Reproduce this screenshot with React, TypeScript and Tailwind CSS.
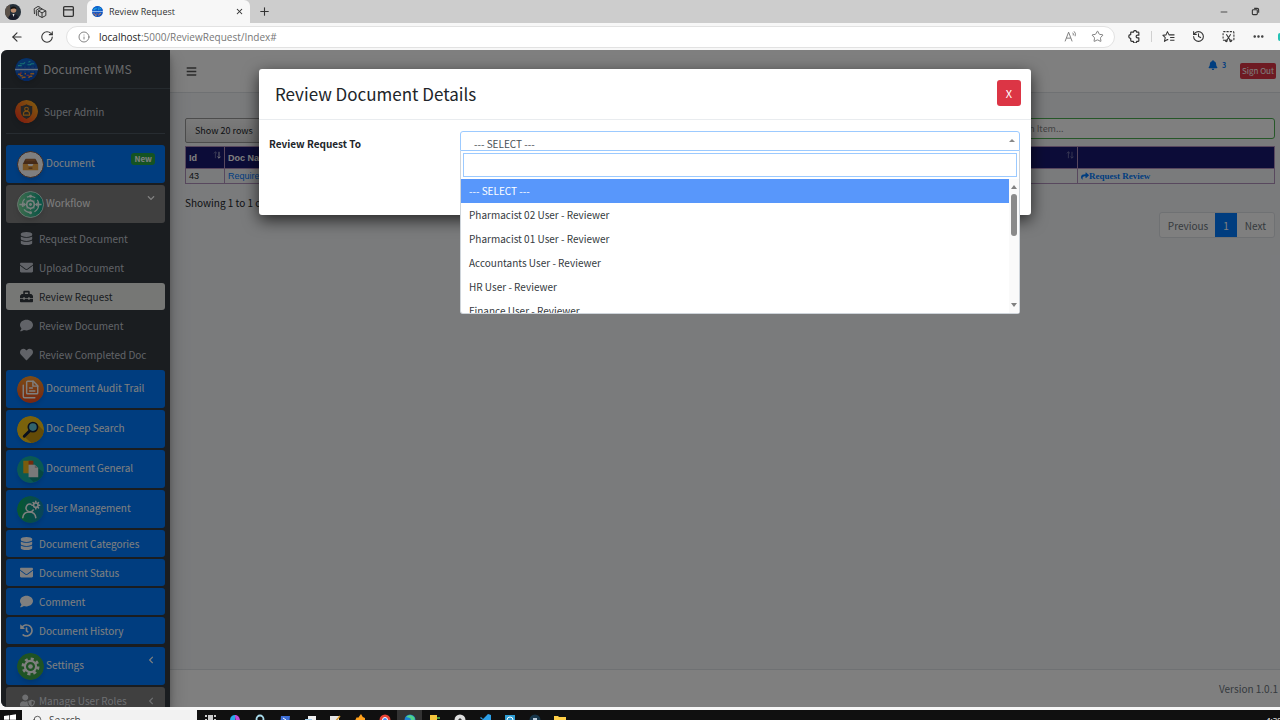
import React, { useState } from 'react';
import {
  FaBars,
  FaBell,
  FaChevronDown,
  FaChevronLeft,
  FaComment,
  FaDatabase,
  FaEnvelope,
  FaHeart,
  FaHistory,
  FaShare,
  FaToolbox,
  FaUserShield,
} from 'react-icons/fa';
import {
  ArrowLeft,
  Ellipsis,
  History,
  Info,
  Minus,
  PanelTop,
  Plus,
  RotateCw,
  Search,
  Star,
  X,
} from 'lucide-react';

const reviewers = [
  '--- SELECT ---',
  'Pharmacist 02 User - Reviewer',
  'Pharmacist 01 User - Reviewer',
  'Accountants User - Reviewer',
  'HR User - Reviewer',
  'Finance User - Reviewer',
];

/* ---------- round icons ---------- */

function GlobeLogo({ className }: { className?: string }) {
  return (
    <svg viewBox="0 0 24 24" className={className} aria-hidden="true">
      <circle cx="12" cy="12" r="12" fill="#0a4fc0" />
      <path d="M1.500 8a11 11 0 0 1 21 0z" fill="#0d66d0" />
      <path d="M0 11.300h24v1.400H0z" fill="#cfe8ff" />
      <path d="M1 9.500h22M1 14.500h22" stroke="#3f8fe8" strokeWidth=".7" strokeDasharray="3 1" />
      <path d="M5 6h4l1.500-1.500M14 4.500l2-1M13 7h3l1-1h3M3 8h4" stroke="#2fe0e6" strokeWidth="1.200" fill="none" />
      <path d="M3 17h2l1 1.500h2M10 16.500h1.500M16 16.500h4M7 21l2-1h2M14 20.500l2-1.500h2" stroke="#ff9c3a" strokeWidth="1.500" fill="none" />
      <path d="M12 18h3M5 15.800h2" stroke="#ff4d5e" strokeWidth="1.300" />
    </svg>
  );
}

function ShieldUser() {
  return (
    <svg viewBox="0 0 24 24" className="size-[23px] rounded-full shadow-md" aria-hidden="true">
      <defs>
        <linearGradient id="shieldBg" x1="0" y1="1" x2="1" y2="0">
          <stop offset="0" stopColor="#ff2a1c" />
          <stop offset="1" stopColor="#ffc01e" />
        </linearGradient>
      </defs>
      <circle cx="12" cy="12" r="12" fill="url(#shieldBg)" />
      <path d="M12 4.500c2 1.400 4 1.800 6 1.800v5.500c0 4-2.600 6.600-6 8-3.400-1.400-6-4-6-8V6.300c2 0 4-.4 6-1.800z" fill="#4a4a4a" />
      <circle cx="12" cy="9.500" r="1.900" fill="none" stroke="#ff9d1e" strokeWidth="1.200" />
      <path d="M8.800 15.800v-1.300a3.200 2.800 0 0 1 6.400 0v1.300z" fill="none" stroke="#ff9d1e" strokeWidth="1.200" />
    </svg>
  );
}

function InboxArt() {
  return (
    <>
      <circle cx="14" cy="14" r="13.500" fill="#fff" stroke="#7a4a33" />
      <path d="M8.500 8.500h11l2.500 5H6z" fill="#8a5530" />
      <path d="M9 8h10v2.500H9z" fill="#a96b3a" />
      <path d="M6 13.500h5l1 2h4l1-2h5V20H6z" fill="#f0a848" />
      <path d="M12 17.200h4v1.200h-4z" fill="#8a5530" />
    </>
  );
}

function WorkflowArt() {
  return (
    <>
      <circle cx="14" cy="14" r="13.500" fill="url(#flowBg)" stroke="#d9e9e4" />
      <g fill="none" stroke="#f1fffb" strokeWidth="1.300">
        <circle cx="14" cy="14" r="8.500" strokeDasharray="9 3" />
        <circle cx="14" cy="14" r="4" strokeWidth="1.800" />
        <path d="M2.500 14h5M20.500 14h5M14 8.500V10M14 18v1.500M10 10l1 1M18 10l-1 1M10 18l1-1M18 18l-1-1" />
      </g>
      <g fill="#f1fffb">
        <circle cx="14" cy="14" r="1.500" />
        <circle cx="14" cy="5.500" r="1.500" />
        <circle cx="14" cy="22.500" r="1.500" />
        <path d="M6.500 11.500 9.500 14l-3 2.500zM21.500 11.500l-3 2.500 3 2.500z" />
      </g>
    </>
  );
}

function AuditArt() {
  return (
    <>
      <circle cx="14" cy="14" r="14" fill="url(#auditBg)" />
      <g fill="none" stroke="#fff" strokeWidth="1.500" strokeLinejoin="round" strokeLinecap="round">
        <path d="M11 5.500h6l4.500 4.500v7.500q0 1-1 1H11q-1 0-1-1v-11q0-1 1-1z" />
        <path d="M16.500 5.500v5h5M13 12.500h3M13 15.500h5.500" />
        <path d="M6.500 9.500V21q0 1.500 1.500 1.500h10.500" />
      </g>
    </>
  );
}

function SearchArt() {
  return (
    <>
      <circle cx="14" cy="14" r="14" fill="#f5c518" />
      <path d="M20.500 8 28 15.500A14 14 0 0 1 15 28l-8-7z" fill="#c8960f" />
      <path d="M13 15.500 7.500 21" stroke="#14203a" strokeWidth="3" strokeLinecap="round" />
      <circle cx="16.500" cy="11.500" r="4.800" fill="#62c7d8" stroke="#14203a" strokeWidth="1.700" />
    </>
  );
}

function PagesArt() {
  return (
    <>
      <circle cx="14" cy="14" r="14" fill="#17b3a6" />
      <path d="m21 12 7 5a14 14 0 0 1-11 10l-5-5z" fill="#0f8f85" />
      <path d="M6.500 5h9v13h-9z" fill="#f5b81c" />
      <path d="M12 5h5v4h-5z" fill="#e2571f" />
      <path d="M12 9h6.500l3.500 3.500V22H12z" fill="#f2f2f2" />
      <path d="M18.500 9v3.500H22z" fill="#bdbdbd" />
    </>
  );
}

function UserGearArt() {
  return (
    <>
      <circle cx="14" cy="14" r="14" fill="url(#userBg)" />
      <g fill="none" stroke="#fff" strokeWidth="1.600" strokeLinecap="round">
        <path d="M14.500 8.500a4 4 0 1 0 2.300 6" />
        <path d="M6 22.500c.5-4.500 3-6 6.500-6s6.500 1.500 7 6" />
        <circle cx="19.500" cy="9.500" r="2.300" />
        <path d="M19.500 5.500v1M19.500 12.500v1M15.500 9.500h1M22.500 9.500h1M16.700 6.700l.7.7M21.700 11.700l.6.6M22.300 6.700l-.6.7" />
      </g>
    </>
  );
}

function GearArt() {
  return (
    <>
      <circle cx="14" cy="14" r="14" fill="#3fa648" />
      <circle cx="14" cy="14" r="7.800" fill="none" stroke="#fff" strokeWidth="3" strokeDasharray="3.060 3.060" />
      <circle cx="14" cy="14" r="5.800" fill="none" stroke="#fff" strokeWidth="2.200" />
      <circle cx="14" cy="14" r="2.400" fill="#fff" />
    </>
  );
}

function RoundIcon({ children }: { children: React.ReactNode }) {
  return (
    <svg viewBox="0 0 28 28" className="size-[27px] shrink-0 rounded-full shadow-md" aria-hidden="true">
      <defs>
        <linearGradient id="flowBg" x1="0" y1="0" x2="1" y2="0">
          <stop offset="0" stopColor="#7fdc9c" />
          <stop offset="1" stopColor="#0aa38a" />
        </linearGradient>
        <linearGradient id="auditBg" x1="0" y1="0" x2="0" y2="1">
          <stop offset="0" stopColor="#f79a2c" />
          <stop offset="1" stopColor="#ee4b22" />
        </linearGradient>
        <linearGradient id="userBg" x1="0" y1="0" x2="1" y2="0">
          <stop offset="0" stopColor="#0fb25c" />
          <stop offset="1" stopColor="#1287b8" />
        </linearGradient>
      </defs>
      {children}
    </svg>
  );
}

/* ---------- browser chrome ---------- */

function BrowserChrome() {
  return (
    <header className="shrink-0 bg-[#cdcdcd] font-['Open_Sans',sans-serif] text-[#333]">
      <div className="flex h-[23px] items-center">
        <svg viewBox="0 0 16 16" className="ml-[5px] size-4 rounded-full" role="img" aria-label="Profile">
          <rect width="16" height="16" fill="#26303a" />
          <path d="M0 0h5v16H0z" fill="#5b5148" />
          <circle cx="8.500" cy="6" r="2.800" fill="#b98a6c" />
          <path d="M5.500 5.500a3 3 0 0 1 6 0c-1-1.500-4-1.500-6 0z" fill="#15110f" />
          <path d="M3 16c0-4 2.500-6 5.500-6s5 2 5 6z" fill="#181c2b" />
          <path d="m7.500 10 1 3 1-3z" fill="#e6e6e6" />
        </svg>
        <svg viewBox="0 0 24 24" className="ml-3 size-[14px]" fill="none" stroke="#333" strokeWidth="1.700" strokeLinejoin="round" aria-hidden="true">
          <path d="m9 10 6.500-3 6.500 3v8l-6.500 3.500L9 18zM9 10l6.500 3.500L22 10M15.500 13.500v8" />
          <path d="M6 18.500 5.500 9l6.500-4 4 1.500M2.500 15.500 2 6.500l6.500-4 4 1.500" />
        </svg>
        <PanelTop className="ml-[15px] size-[13px]" strokeWidth={2.4} />
        <div className="ml-3 flex h-[23px] w-[163px] items-center self-end rounded-t-md bg-[#f7f7f7] pr-[6px] pl-[5px]">
          <GlobeLogo className="size-[11px]" />
          <span className="ml-[6px] flex-1 text-[9px] leading-4">Review Request</span>
          <button type="button" aria-label="Close tab">
            <X className="size-[9px]" strokeWidth={2.8} />
          </button>
        </div>
        <button type="button" aria-label="New tab" className="ml-2">
          <Plus className="size-[13px]" strokeWidth={2} />
        </button>
        <div className="ml-auto flex items-center gap-[22px] pr-5">
          <button type="button" aria-label="Minimize">
            <Minus className="size-[10px]" />
          </button>
          <button type="button" aria-label="Restore">
            <svg viewBox="0 0 10 10" className="size-[9px]" fill="none" stroke="#333" strokeWidth="1.200">
              <rect x="1.500" y="3" width="5.500" height="5.500" rx="1" />
              <path d="M3.500 1.500H7q1.500 0 1.500 1.500v3.500" />
            </svg>
          </button>
        </div>
      </div>

      <div className="flex h-[27px] items-center bg-[#f7f7f7] pl-[10px]">
        <button type="button" aria-label="Back">
          <ArrowLeft className="size-[14px]" strokeWidth={1.9} />
        </button>
        <button type="button" aria-label="Refresh" className="ml-4">
          <RotateCw className="size-[14px]" strokeWidth={1.9} />
        </button>
        <div className="ml-3 flex h-[22px] flex-1 items-center rounded-full border border-[#e2e2e2] bg-white pr-[10px] pl-[11px]">
          <Info className="size-3 text-[#777]" strokeWidth={1.8} />
          <span className="ml-[9px] flex-1 text-[10px] leading-4 text-[#777]">
            <span className="text-[#222]">localhost</span>:5000/ReviewRequest/Index#
          </span>
          <svg viewBox="0 0 24 24" className="size-[13px]" fill="none" stroke="#777" strokeWidth="1.700" aria-hidden="true">
            <path d="M2 21 8.500 4 15 21M4.500 15h8M16 5q2 2 1 5M18.500 2.500q4 3 2 9" />
          </svg>
          <Star className="ml-[14px] size-[13px] text-[#777]" strokeWidth={1.7} />
        </div>
        <svg viewBox="0 0 24 24" className="ml-[13px] size-[13px]" fill="none" stroke="#333" strokeWidth="2.200" strokeLinejoin="round" aria-hidden="true">
          <path d="M6 4h4a3 3 0 0 1 6 0h3q1 0 1 1v4.500h-2.500a2.500 2.500 0 0 0 0 5H20V20q0 1-1 1h-3a3 3 0 0 1-6 0H7q-2 0-2-2v-3.500a3.500 3.500 0 0 1 0-7V5q0-1 1-1z" />
        </svg>
        <span className="mx-[10px] h-[11px] w-px bg-[#d0d0d0]" />
        <div className="flex items-center gap-[17px]">
          <svg viewBox="0 0 24 24" className="size-[13px]" fill="none" stroke="#333" strokeWidth="1.900" strokeLinejoin="round" aria-hidden="true">
            <path d="M14 9h-1L10 3 7.500 9 1.500 9.500 6 14 4.500 21l5.500-3.500 1.500 1M14 9h9M15 14h8M15 19h8" />
          </svg>
          <History className="size-[13px]" strokeWidth={2} />
          <svg viewBox="0 0 24 24" className="size-[13px]" fill="none" stroke="#333" strokeWidth="2" aria-hidden="true">
            <path d="M6 19H4q-2 0-2-2V5q0-2 2-2h16q2 0 2 2v12q0 2-2 2h-2" strokeDasharray="4 2" />
            <path d="m8 8 7 11M16 8 9 19" />
            <circle cx="8" cy="20" r="1.500" />
            <circle cx="16" cy="20" r="1.500" />
          </svg>
          <Ellipsis className="size-[13px]" strokeWidth={2.6} />
        </div>
        <span className="ml-[13px] h-2 w-[2px] rounded-l-full bg-[#25c2b5]" />
      </div>
    </header>
  );
}

/* ---------- sidebar ---------- */

const bigItem = 'flex h-[38px] w-full items-center rounded-[3px] pl-[11px] pr-[10px] text-left text-white';
const smallItem = 'flex h-[27px] w-full items-center rounded-[3px] pl-[14px] pr-[10px] text-left';
const bigLabel = 'mb-1 ml-[2px] flex-1';

function BigLink({ art, label }: { art: React.ReactNode; label: string }) {
  return (
    <a href="#" className={`${bigItem} bg-[#007bff]`}>
      <RoundIcon>{art}</RoundIcon>
      <span className={bigLabel}>{label}</span>
    </a>
  );
}

const subItems = [
  { label: 'Request Document', icon: FaDatabase },
  { label: 'Upload Document', icon: FaEnvelope },
  { label: 'Review Request', icon: FaToolbox, active: true },
  { label: 'Review Document', icon: FaComment },
  { label: 'Review Completed Doc', icon: FaHeart },
];

const plainItems = [
  { label: 'Document Categories', icon: FaDatabase },
  { label: 'Document Status', icon: FaEnvelope },
  { label: 'Comment', icon: FaComment },
  { label: 'Document History', icon: FaHistory },
];

function Sidebar() {
  return (
    <aside className="z-10 flex w-[169px] shrink-0 flex-col overflow-hidden bg-[#343a40] shadow-[0_9px_18px_rgba(0,0,0,0.25),0_6px_6px_rgba(0,0,0,0.22)]">
      <a href="#" className="flex h-[39px] shrink-0 items-center border-b border-[#4b545c] pl-[14px] text-[12px] text-[#d0d3d6]">
        <GlobeLogo className="size-[23px] rounded-full shadow-md" />
        <span className="ml-[5px]">Document WMS</span>
      </a>
      <div className="mx-[5px] flex h-[45px] shrink-0 items-center border-b border-[#4f5962] pl-[9px] text-[#c2c7d0]">
        <ShieldUser />
        <a href="#" className="ml-[6px]">Super Admin</a>
      </div>

      <nav className="mx-[5px] mt-[11px] flex flex-col gap-[2px]">
        <a href="#" className={`${bigItem} bg-[#007bff]`}>
          <RoundIcon><InboxArt /></RoundIcon>
          <span className={bigLabel}>Document</span>
          <span className="mb-[10px] rounded-[3px] bg-[#28a745] px-[3px] text-[8px] leading-3 font-bold">New</span>
        </a>
        <button type="button" className={`${bigItem} bg-[#808080]`}>
          <RoundIcon><WorkflowArt /></RoundIcon>
          <span className={bigLabel}>Workflow</span>
          <FaChevronDown className="mb-3 size-2" />
        </button>
        {subItems.map(({ label, icon: Icon, active }) => (
          <a
            key={label}
            href="#"
            className={`${smallItem} ${active ? 'bg-[#eceeeb] text-[#343a40]' : 'text-[#c2c7d0]'}`}
          >
            <Icon className="size-[13px]" />
            <span className="ml-[6px]">{label}</span>
          </a>
        ))}
        <div className="flex flex-col gap-[2px]">
          <BigLink art={<AuditArt />} label="Document Audit Trail" />
          <BigLink art={<SearchArt />} label="Doc Deep Search" />
          <BigLink art={<PagesArt />} label="Document General" />
          <BigLink art={<UserGearArt />} label="User Management" />
        </div>
        {plainItems.map(({ label, icon: Icon }) => (
          <a key={label} href="#" className={`${smallItem} bg-[#007bff] text-white`}>
            <Icon className="size-[13px]" />
            <span className="ml-[6px]">{label}</span>
          </a>
        ))}
        <button type="button" className={`${bigItem} mt-px bg-[#007bff]`}>
          <RoundIcon><GearArt /></RoundIcon>
          <span className={bigLabel}>Settings</span>
          <FaChevronLeft className="mb-3 size-2" />
        </button>
        <button type="button" className={`${smallItem} bg-[#808080] text-[#dcdfe3]`}>
          <FaUserShield className="size-[15px]" />
          <span className="ml-1 flex-1">Manage User Roles</span>
          <FaChevronLeft className="size-2" />
        </button>
      </nav>
    </aside>
  );
}

/* ---------- page behind the dialog ---------- */

function SortArrows({ active }: { active?: boolean }) {
  return (
    <svg viewBox="0 0 10 10" className="size-2 shrink-0" fill="none" strokeWidth="1" aria-hidden="true">
      <path d="M3 9V1M1 3l2-2 2 2" stroke="#7c7cae" />
      <path d="M7.500 1v8M5.500 7l2 2 2-2" stroke={active ? '#fff' : '#7c7cae'} />
    </svg>
  );
}

function DocumentTable() {
  const cell = 'border border-[#b090bc] px-[3px]';
  return (
    <table className="w-full table-fixed border-collapse font-['Liberation_Sans',sans-serif] text-[9px] leading-[14px]">
      <thead>
        <tr className="h-[22px] bg-[#191970] text-left text-white">
          <th className={`${cell} w-[39px]`}>
            <div className="flex items-start justify-between">Id<SortArrows active /></div>
          </th>
          <th className={cell}>Doc Name</th>
          <th className={`${cell} w-[80px]`}>
            <div className="mb-[6px] flex justify-end"><SortArrows /></div>
          </th>
          <th className={`${cell} w-[197px]`} aria-label="Actions" />
        </tr>
      </thead>
      <tbody>
        <tr className="h-[15px] text-[#212529]">
          <td className={cell}>43</td>
          <td className={cell}><a href="#" className="text-[#007bff]">Requirements</a></td>
          <td className={cell} />
          <td className={cell}>
            <a href="#" className="flex items-center font-['Liberation_Serif',serif] font-bold text-[#007bff]">
              <FaShare className="size-2" />Request Review
            </a>
          </td>
        </tr>
      </tbody>
    </table>
  );
}

function Content() {
  return (
    <div className="flex min-w-0 flex-1 flex-col bg-[#f4f6f9] text-[#212529]">
      <div className="flex h-[43px] shrink-0 items-center border-b border-[#dee2e6] bg-white pr-1 pl-4">
        <button type="button" aria-label="Toggle sidebar">
          <FaBars className="size-[11px] text-[#555]" />
        </button>
        <a href="#" className="mb-3 ml-auto flex items-center text-[#007bff]">
          <FaBell className="size-[10px]" />
          <span className="ml-1 text-[7px] font-bold">3</span>
        </a>
        <button type="button" className="ml-[14px] h-4 rounded-[2px] bg-[#dc3545] px-[2px] text-[8px] leading-4 text-white">
          Sign Out
        </button>
      </div>

      <main className="flex-1 pt-[25px] pr-[5px] pl-[15px]">
        <div className="flex items-start justify-between">
          <button type="button" className="h-[25px] rounded-[2px] border border-[#999] bg-linear-to-b from-[#f6f6f6] to-[#dddddd] px-[9px] text-[9px]">
            Show 20 rows
          </button>
          <input
            type="text"
            aria-label="Search Item"
            placeholder="Search Item..."
            className="h-[21px] w-[278px] rounded-[3px] border border-[#4caf50] bg-white px-2 text-[9px] placeholder:text-[#888]"
          />
        </div>
        <div className="mt-[3px]">
          <DocumentTable />
        </div>
        <p className="mt-[11px] leading-4">Showing 1 to 1 of 1 entries</p>
        <nav aria-label="Pages" className="mt-[1px] flex justify-end">
          <div className="flex h-[26px] items-stretch rounded-[3px] border border-[#dee2e6] bg-white text-[#6c757d]">
            <button type="button" className="pr-[7px] pl-2">Previous</button>
            <button type="button" className="bg-[#007bff] px-2 text-white">1</button>
            <button type="button" className="px-2">Next</button>
          </div>
        </nav>
      </main>

      <footer className="flex h-[38px] shrink-0 items-center justify-end border-t border-[#dee2e6] bg-white pr-[2px] text-[#6c757d]">
        Version 1.0.1
      </footer>
    </div>
  );
}

/* ---------- dialog ---------- */

function ReviewerSelect() {
  const [selected, setSelected] = useState(0);
  return (
    <div className="relative flex-1">
      <button
        type="button"
        id="reviewer"
        role="combobox"
        aria-expanded="true"
        aria-controls="reviewer-list"
        className="flex h-5 w-full items-start justify-between rounded-t-[3px] border border-[#9ccaff] bg-white pr-1 pl-[13px] text-[#495057]"
      >
        <span className="mt-[5px] leading-[14px]">{reviewers[selected]}</span>
        <span className="mt-[7px] border-x-3 border-b-3 border-x-transparent border-b-[#888]" />
      </button>
      <div className="absolute inset-x-0 top-5 rounded-b-[3px] border border-t-0 border-[#ced4da] bg-white">
        <div className="px-[2px] pt-[2px] pb-[2px]">
          <input
            type="text"
            aria-label="Filter reviewers"
            className="block h-6 w-full border border-[#9ccaff] px-1 outline-none"
          />
        </div>
        <div className="flex h-[134px] overflow-hidden">
          <ul id="reviewer-list" role="listbox" className="flex-1">
            {reviewers.map((name, index) => (
              <li
                key={name}
                role="option"
                aria-selected={index === selected}
                onClick={() => setSelected(index)}
                className={`h-6 pl-2 leading-6 ${
                  index === selected ? 'bg-[#5897fb] text-white' : 'text-[#343a40]'
                }`}
              >
                {name}
              </li>
            ))}
          </ul>
          <div className="flex w-[10px] flex-col items-center bg-[#fafafa] pt-[6px] pb-[6px]" aria-hidden="true">
            <span className="border-x-3 border-b-4 border-x-transparent border-b-[#808080]" />
            <span className="mt-[5px] h-[42px] w-[6px] rounded-full bg-[#8a8a8a]" />
            <span className="mt-auto border-x-3 border-t-4 border-x-transparent border-t-[#808080]" />
          </div>
        </div>
      </div>
    </div>
  );
}

function ReviewDialog() {
  return (
    <div className="absolute inset-0 z-20 flex items-start justify-center bg-black/50 pt-[19px] pl-[9px]">
      <div
        role="dialog"
        aria-labelledby="dialog-title"
        className="w-full max-w-[772px] rounded-[3px] bg-white shadow-[0_5px_16px_rgba(0,0,0,0.7)]"
      >
        <div className="flex h-[51px] items-start justify-between border-b border-[#e9ecef] pt-[11px] pr-[10px] pl-4">
          <h4 id="dialog-title" className="text-[17px] leading-7 text-[#212529]">Review Document Details</h4>
          <button type="button" aria-label="Close" className="h-[26px] w-6 rounded-[3px] bg-[#dc3545] text-[11px] text-white">
            X
          </button>
        </div>
        <div className="flex h-[95px] items-start pt-[11px] pr-[11px] pl-[10px]">
          <label htmlFor="reviewer" className="mt-[5px] w-[191px] leading-4 font-bold text-[#212529]">
            Review Request To
          </label>
          <ReviewerSelect />
        </div>
      </div>
    </div>
  );
}

/* ---------- taskbar ---------- */

const taskIcons = [
  <path key="t" d="M1 1h2v2H1zM4 1h5v6H4zM10 1h2v2h-2zM1 5h2v6H1zM10 5h2v6h-2z" fill="#ccc" />,
  <g key="c"><path d="M1 6a5 5 0 0 1 6-5l-2 10H2z" fill="#28a8ea" /><path d="M6 1q4 0 5 5t-4 5z" fill="#c64bd8" /></g>,
  <circle key="o" cx="6" cy="5" r="3.500" fill="none" stroke="#a9dcec" strokeWidth="1.800" />,
  <g key="p"><path d="M2 2h9l-1 9H1z" fill="#3d6fd8" /><path d="m4 4 3 2-3 3" stroke="#fff" fill="none" /></g>,
  <g key="f"><path d="M4 2h8v8H4z" fill="#f1f1f1" /><path d="M1 5h7v6H1z" fill="#9ec9e6" /></g>,
  <g key="n"><path d="M1 2h9v9H1z" fill="#e9e9e9" /><path d="m6 8 5-6" stroke="#d99a2b" strokeWidth="1.500" /></g>,
  <path key="ff" d="M1 7q1-3 2-4l1 1 3-4q1 3 4 4v3a5 5 0 0 1-10 0z" fill="#ffa11c" />,
  <g key="g"><circle cx="6" cy="6" r="5.500" fill="#e94335" /><path d="M6 6h5.500A5.500 5.500 0 0 1 6 11.500z" fill="#fbbc05" /><circle cx="6" cy="6" r="2.500" fill="#4285f4" stroke="#fff" /></g>,
  <g key="e"><circle cx="6" cy="6" r="5.500" fill="#1b82d6" /><path d="M2 3q4-4 8 0 2 3-1 4H6q3-3-4-4z" fill="#4fd38b" /></g>,
  <g key="y"><path d="M1 1h7v10H1z" fill="#f5c63c" /><path d="M8 3h3v2H8z" fill="#4a9a3f" /></g>,
  <g key="k"><circle cx="6" cy="6" r="5.500" fill="#ddd" /><path d="m4 6 2-2 2 2-2 3z" fill="#333" /></g>,
  <path key="v" d="m9 0 3 1v10l-3 1-5-5-2 2-1-1 3-2-3-2 1-1 2 2z" fill="#2c9fe8" />,
  <g key="s"><path d="M1 1h10v10H1z" fill="#2f9fd6" /><circle cx="6" cy="6" r="3" fill="none" stroke="#fff" /></g>,
  <g key="d"><circle cx="6" cy="6" r="5.500" fill="#17364b" /><path d="M4 4h4v4H4z" fill="#bcd" /></g>,
  <path key="x" d="M0 2h4l1 1h7v8H0z" fill="#ffcf48" />,
];

function Taskbar() {
  return (
    <div className="h-[10px] shrink-0 overflow-hidden bg-[#101010] font-['Open_Sans',sans-serif]">
      <div className="flex h-5 items-center">
        <button type="button" aria-label="Start" className="w-[22px] pl-1">
          <svg viewBox="0 0 12 12" className="size-3" fill="#fff">
            <path d="M0 2l5-.7v4.400H0zM5.700 1.200 12 .3v5.400H5.700zM0 6.400h5v4.300L0 10zM5.700 6.400H12v5.300l-6.300-.9z" />
          </svg>
        </button>
        <div className="flex h-5 w-[175px] items-center bg-[#f2f2f2] pl-[10px] text-[10px] text-[#444]">
          <Search className="size-[10px] -scale-x-100" />
          <span className="ml-[7px]">Search</span>
        </div>
        {taskIcons.map((icon, index) => (
          <span
            key={index}
            className={`flex h-5 w-[25px] items-center justify-center ${index === 8 ? 'bg-[#333]' : ''}`}
          >
            <svg viewBox="0 0 12 12" className="size-3" aria-hidden="true">{icon}</svg>
          </span>
        ))}
        <span className="ml-auto w-[14px] overflow-hidden text-[8px] leading-3 whitespace-nowrap text-white">4:20 PM</span>
      </div>
    </div>
  );
}

export default function App() {
  return (
    <div className="flex h-screen flex-col overflow-hidden bg-[#f7f7f7] font-['Noto_Sans_CJK_SC',sans-serif] text-[10px]">
      <BrowserChrome />
      <div className="relative mb-[3px] ml-px flex min-h-0 flex-1 overflow-hidden rounded-l-md">
        <Sidebar />
        <Content />
        <ReviewDialog />
      </div>
      <Taskbar />
    </div>
  );
}
